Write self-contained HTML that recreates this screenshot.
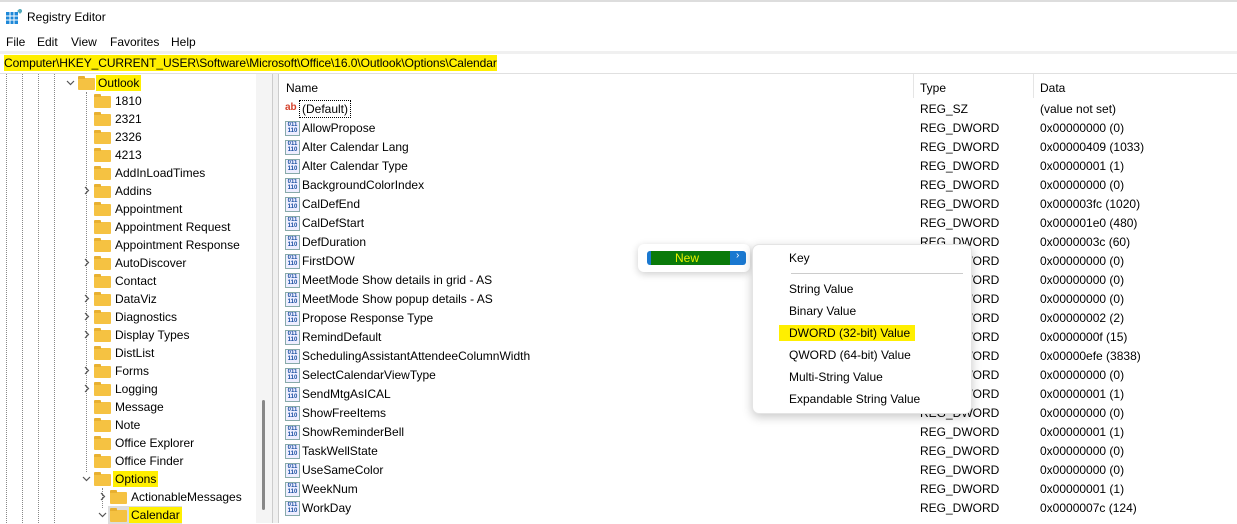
<!DOCTYPE html><html><head><style>
body{margin:0;width:1237px;height:523px;overflow:hidden;background:#fff;font-family:"Liberation Sans",sans-serif;font-size:12px;color:#000;position:relative}
.a{position:absolute;white-space:nowrap}
.hl{background:#ffef00}
.fo{position:absolute;width:17px;height:12px;background:#f5c242;border-radius:1px}
.fo:before{content:"";position:absolute;left:0;top:-2px;width:7px;height:3px;background:#e8b030;border-radius:1px 1px 0 0}
.ic{position:absolute;width:13px;height:13px;border:1px solid #8aa;background:#eef;font-size:6px;line-height:6px;color:#1a4fa0;font-weight:bold;text-align:center;overflow:hidden}
.ab{position:absolute;width:14px;height:13px;color:#d5402a;font-weight:bold;font-size:10px;line-height:11px}
.dv{position:absolute;border-left:1px dotted #888}
.ch{position:absolute}
</style></head><body>
<div style="position:absolute;left:0;top:0;width:1237px;height:2px;background:#ddd"></div>
<svg class="a" style="left:6px;top:9px" width="16" height="15"><rect x="0" y="3" width="12" height="12" fill="#1e88d8"/><path d="M4 3v12M8 3v12M0 7h12M0 11h12" stroke="#fff" stroke-width="1"/><rect x="12" y="0" width="4" height="4" fill="#5ab" transform="rotate(45 14 2)"/></svg>
<div class="a" style="left:27px;top:10px;font-size:12px">Registry Editor</div>
<div class="a" style="left:6px;top:35px">File</div>
<div class="a" style="left:37px;top:35px">Edit</div>
<div class="a" style="left:71px;top:35px">View</div>
<div class="a" style="left:110px;top:35px">Favorites</div>
<div class="a" style="left:171px;top:35px">Help</div>
<div style="position:absolute;left:0;top:51px;width:1237px;height:3px;background:#f0f0f0"></div>
<div class="a hl" style="left:4px;top:55px;width:493px;height:16px;line-height:16px;letter-spacing:-0.08px;overflow:hidden">Computer\HKEY_CURRENT_USER\Software\Microsoft\Office\16.0\Outlook\Options\Calendar</div>
<div style="position:absolute;left:0;top:73px;width:1237px;height:1px;background:#e0e0e0"></div>
<div style="position:absolute;left:272px;top:74px;width:5px;height:449px;background:#f0f0f0;border-left:1px solid #ccc;border-right:1px solid #ccc"></div>
<div style="position:absolute;left:256px;top:74px;width:16px;height:449px;background:#f4f4f4"></div>
<div style="position:absolute;left:262px;top:400px;width:3px;height:110px;background:#888;border-radius:2px"></div>
<div class="dv" style="left:6px;top:74px;height:449px"></div>
<div class="dv" style="left:22px;top:74px;height:449px"></div>
<div class="dv" style="left:38px;top:74px;height:449px"></div>
<div class="dv" style="left:54px;top:74px;height:449px"></div>
<div class="dv" style="left:86px;top:92px;height:380px"></div>
<div class="dv" style="left:102px;top:488px;height:20px"></div>
<div id="tree"></div>
<div class="a" style="left:286px;top:81px">Name</div>
<div class="a" style="left:920px;top:81px">Type</div>
<div class="a" style="left:1040px;top:81px">Data</div>
<div style="position:absolute;left:913px;top:74px;width:1px;height:24px;background:#e5e5e5"></div>
<div style="position:absolute;left:1033px;top:74px;width:1px;height:24px;background:#e5e5e5"></div>
<div id="rows"></div>
<div style="position:absolute;left:638px;top:244px;width:112px;height:28px;background:#fff;border-radius:6px;box-shadow:0 2px 8px rgba(0,0,0,.2)"></div>
<div style="position:absolute;left:647px;top:251px;width:99px;height:14px;background:#0a7a0a;border-radius:3px;border-left:4px solid #1a78d0;border-right:16px solid #1a78d0;box-sizing:border-box"></div>
<div class="a" style="left:675px;top:251px;color:#e8f000;font-size:12px">New</div>
<div class="a" style="left:736px;top:250px;color:#fff;font-size:10px">›</div>
<div style="position:absolute;left:752px;top:244px;width:218px;height:168px;background:#fff;border-radius:7px;box-shadow:0 3px 10px rgba(0,0,0,.22);border:1px solid #e4e4e4"></div>
<div style="position:absolute;left:791px;top:273px;width:172px;height:1px;background:#ccc"></div>
<div class="a hl" style="left:779px;top:325px;width:136px;height:16px"></div>
<div class="a" style="left:789px;top:251px">Key</div>
<div class="a" style="left:789px;top:282px">String Value</div>
<div class="a" style="left:789px;top:304px">Binary Value</div>
<div class="a" style="left:789px;top:326px">DWORD (32-bit) Value</div>
<div class="a" style="left:789px;top:348px">QWORD (64-bit) Value</div>
<div class="a" style="left:789px;top:370px">Multi-String Value</div>
<div class="a" style="left:789px;top:392px">Expandable String Value</div>
<script>
var t=[["Outlook",70,78,98,1,1],["1810",0,94,115],["2321",0,94,115],["2326",0,94,115],["4213",0,94,115],["AddInLoadTimes",0,94,115],["Addins",86,94,115],["Appointment",0,94,115],["Appointment Request",0,94,115],["Appointment Response",0,94,115],["AutoDiscover",86,94,115],["Contact",0,94,115],["DataViz",86,94,115],["Diagnostics",86,94,115],["Display Types",86,94,115],["DistList",0,94,115],["Forms",86,94,115],["Logging",86,94,115],["Message",0,94,115],["Note",0,94,115],["Office Explorer",0,94,115],["Office Finder",0,94,115],["Options",86,94,115,1,1],["ActionableMessages",102,110,131],["Calendar",102,110,131,1,1]];
var h="";t.forEach(function(r,i){var y=83+i*18;
if(r[1])h+='<svg class="ch" style="left:'+(r[1]-4)+'px;top:'+(y-5)+'px" width="9" height="9"><path d="'+(r[5]?'M1 3l3.5 3.5L8 3':'M3 1l3.5 3.5L3 8')+'" fill="none" stroke="#555" stroke-width="1.2"/></svg>';
if(r[0]=="Calendar")h+='<div class="a" style="left:108px;top:'+(y-9)+'px;width:74px;height:18px;background:#ddd"></div>';
h+='<div class="fo" style="left:'+r[2]+'px;top:'+(y-5)+'px"></div>';
h+='<div class="a'+(r[4]?' hl':'')+'" style="left:'+(r[3]-2)+'px;padding:0 2px;top:'+(y-8)+'px;line-height:16px">'+r[0]+'</div>';});
document.getElementById("tree").innerHTML=h;
var R=[["(Default)","REG_SZ","(value not set)"],["AllowPropose","REG_DWORD","0x00000000 (0)"],["Alter Calendar Lang","REG_DWORD","0x00000409 (1033)"],["Alter Calendar Type","REG_DWORD","0x00000001 (1)"],["BackgroundColorIndex","REG_DWORD","0x00000000 (0)"],["CalDefEnd","REG_DWORD","0x000003fc (1020)"],["CalDefStart","REG_DWORD","0x000001e0 (480)"],["DefDuration","REG_DWORD","0x0000003c (60)"],["FirstDOW","REG_DWORD","0x00000000 (0)"],["MeetMode Show details in grid - AS","REG_DWORD","0x00000000 (0)"],["MeetMode Show popup details - AS","REG_DWORD","0x00000000 (0)"],["Propose Response Type","REG_DWORD","0x00000002 (2)"],["RemindDefault","REG_DWORD","0x0000000f (15)"],["SchedulingAssistantAttendeeColumnWidth","REG_DWORD","0x00000efe (3838)"],["SelectCalendarViewType","REG_DWORD","0x00000000 (0)"],["SendMtgAsICAL","REG_DWORD","0x00000001 (1)"],["ShowFreeItems","REG_DWORD","0x00000000 (0)"],["ShowReminderBell","REG_DWORD","0x00000001 (1)"],["TaskWellState","REG_DWORD","0x00000000 (0)"],["UseSameColor","REG_DWORD","0x00000000 (0)"],["WeekNum","REG_DWORD","0x00000001 (1)"],["WorkDay","REG_DWORD","0x0000007c (124)"]];
h="";R.forEach(function(r,i){var y=101+i*19;
h+=i==0?'<div class="ab" style="left:285px;top:'+(y+1)+'px">ab</div>':'<div class="ic" style="left:285px;top:'+(y+1)+'px">011<br>110</div>';
h+='<div class="a" style="left:300px;top:'+y+'px;line-height:16px;padding:0 2px;'+(i==0?'outline:1px dotted #000':'')+'">'+r[0]+'</div>';
h+='<div class="a" style="left:920px;top:'+(y+1)+'px">'+r[1]+'</div><div class="a" style="left:1040px;top:'+(y+1)+'px">'+r[2]+'</div>';});
document.getElementById("rows").innerHTML=h;
</script>
</body></html>
